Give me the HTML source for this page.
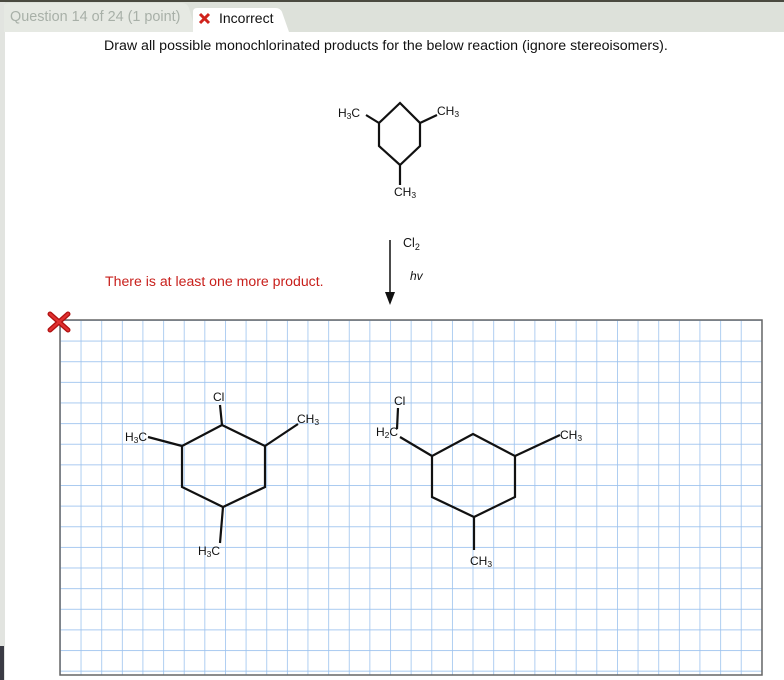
<!DOCTYPE html>
<html><head><style>
body{margin:0;width:784px;height:680px;position:relative;background:#fff;font-family:"Liberation Sans",Arial,sans-serif;overflow:hidden}
.a{position:absolute}
</style></head><body>
<div class="a" style="left:0;top:0;width:784px;height:2px;background:#4a4a40"></div>
<div class="a" style="left:0;top:2px;width:784px;height:30px;background:#dde1da"></div>
<div class="a" style="left:0;top:2px;width:5px;height:678px;background:#e2e4e0"></div>
<div class="a" style="left:0;top:646px;width:4px;height:34px;background:#3a3a44"></div>
<svg class="a" style="left:0;top:0" width="784" height="40">
<path d="M4 32 L4 6 Q4 3 8 3 L182 3 Q187 3 189 8 L196 32 Z" fill="#e6e9e3"/>
<path d="M193 32 L193 12 Q193 8 197 8 L276 8 Q280 8 282 12 L289 32 Z" fill="#fff"/>
<text x="10" y="21" font-size="14.4" fill="#a8b0a8" font-family="Liberation Sans">Question 14 of 24 (1 point)</text>
<path d="M200 14 L209 23 M209 14 L200 23" stroke="#d0231c" stroke-width="3"/>
<text x="219" y="23" font-size="14" fill="#111" font-family="Liberation Sans">Incorrect</text>
</svg>
<div class="a" style="left:104px;top:38px;font-size:14.2px;color:#111;white-space:nowrap">Draw all possible monochlorinated products for the below reaction (ignore stereoisomers).</div>
<div class="a" style="left:105px;top:273px;font-size:14.1px;color:#c8201c;white-space:nowrap">There is at least one more product.</div>
<svg class="a" style="left:0;top:0" width="784" height="680" font-family="Liberation Sans">
<defs><pattern id="g" x="60" y="320" width="20.63" height="20.63" patternUnits="userSpaceOnUse"><path d="M0 0 L20.63 0 M0 0 L0 20.63" stroke="#9cc2ee" stroke-width="1.6" fill="none"/></pattern></defs>
<rect x="60" y="320" width="702" height="355" fill="url(#g)"/>
<rect x="60" y="320" width="702" height="355" fill="none" stroke="#666" stroke-width="1.5"/>
<path d="M50 314 L68 330 M68 314 L50 330" stroke="#b01010" stroke-width="5" stroke-linecap="round"/>
<path d="M50 314 L68 330 M68 314 L50 330" stroke="#e03030" stroke-width="2.5" stroke-linecap="round"/>
<g stroke="#111" stroke-width="2.2" fill="none">
<path d="M400 103 L420 123 L420 146 L400 165 L379 146 L379 123 Z M379 123 L366 115 M420 123 L437 115 M400 165 L400 185"/>
<path d="M222 425 L265 446 L265 487 L223 507 L182 487 L182 446 Z M222 425 L220 405 M182 446 L148 437 M265 446 L298 424 M223 507 L220 543"/>
<path d="M473 434 L515 456 L515 497 L474 517 L432 497 L432 456 Z M432 456 L400 437 M398 408 L397 429 M515 456 L560 435 M474 517 L474 550"/>
<path d="M390 240 L390 294" stroke-width="1.5"/>
</g>
<path d="M385 292 L395 292 L390 305 Z" fill="#111"/>
<g font-size="12" fill="#111">
<text x="338" y="117">H<tspan font-size="8.5" dy="2">3</tspan><tspan dy="-2">C</tspan></text>
<text x="437" y="115">CH<tspan font-size="8.5" dy="2">3</tspan></text>
<text x="394" y="196">CH<tspan font-size="8.5" dy="2">3</tspan></text>
<text x="403" y="247" font-size="12.5">Cl<tspan font-size="9" dy="3">2</tspan></text>
<text x="410" y="280" font-style="italic">hv</text>
<text x="213" y="401">Cl</text>
<text x="125" y="441">H<tspan font-size="8.5" dy="2">3</tspan><tspan dy="-2">C</tspan></text>
<text x="297" y="423">CH<tspan font-size="8.5" dy="2">3</tspan></text>
<text x="198" y="555">H<tspan font-size="8.5" dy="2">3</tspan><tspan dy="-2">C</tspan></text>
<text x="394" y="405">Cl</text>
<text x="376" y="436">H<tspan font-size="8.5" dy="2">2</tspan><tspan dy="-2">C</tspan></text>
<text x="560" y="439">CH<tspan font-size="8.5" dy="2">3</tspan></text>
<text x="470" y="565">CH<tspan font-size="8.5" dy="2">3</tspan></text>
</g>
</svg>
</body></html>
